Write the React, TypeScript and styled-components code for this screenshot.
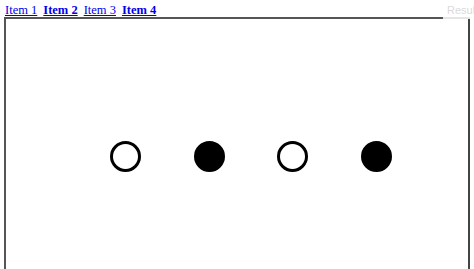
import React from 'react';
import styled, { createGlobalStyle } from 'styled-components';

const GlobalStyle = createGlobalStyle`
  html, body {
    margin: 0;
    padding: 0;
    background: #fff;
    overflow: hidden;
  }
`;

const Page = styled.div`
  position: relative;
  width: 474px;
  height: 269px;
  padding: 3px 4px 0 4px;
  box-sizing: border-box;
  overflow: hidden;
  font-family: 'Liberation Serif', 'Times New Roman', serif;
`;

const Nav = styled.nav`
  display: flex;
  gap: 6px;
  height: 14px;
  padding-left: 1px;
  align-items: center;
`;

const NavLink = styled.a<{ $bold?: boolean }>`
  font-size: 12.5px;
  line-height: 15px;
  color: #0000ee;
  text-decoration: underline;
  font-weight: ${({ $bold }) => ($bold ? 700 : 400)};
  cursor: pointer;
`;

const Frame = styled.div`
  height: 275px;
  border-style: solid;
  border-width: 2px;
  border-color: #555 #444 #444 #555;
  display: flex;
  align-items: center;
  padding-left: 104px;
`;

const Dots = styled.div`
  display: flex;
  gap: 52.7px;
`;

const Dot = styled.div<{ $filled?: boolean }>`
  width: 31px;
  height: 31px;
  box-sizing: border-box;
  border-radius: 50%;
  border: 3px solid #000;
  background: ${({ $filled }) => ($filled ? '#000' : '#fff')};
`;

const ResultTab = styled.div`
  position: absolute;
  top: 0;
  left: 443px;
  padding: 5px 4px 0 4px;
  height: 19px;
  box-sizing: border-box;
  background: rgba(255, 255, 255, 0.85);
  font-family: 'Liberation Sans', Arial, sans-serif;
  font-size: 11px;
  line-height: 11px;
  color: #dadada;
  white-space: nowrap;
`;

const items = [
  { label: 'Item 1', bold: false },
  { label: 'Item 2', bold: true },
  { label: 'Item 3', bold: false },
  { label: 'Item 4', bold: true },
];

const dots = [false, true, false, true];

const App = () => (
  <>
    <GlobalStyle />
    <Page>
      <Nav>
        {items.map(({ label, bold }) => (
          <NavLink key={label} $bold={bold}>
            {label}
          </NavLink>
        ))}
      </Nav>
      <Frame>
        <Dots>
          {dots.map((filled, i) => (
            <Dot key={i} $filled={filled} />
          ))}
        </Dots>
      </Frame>
      <ResultTab>Result</ResultTab>
    </Page>
  </>
);

export default App;
